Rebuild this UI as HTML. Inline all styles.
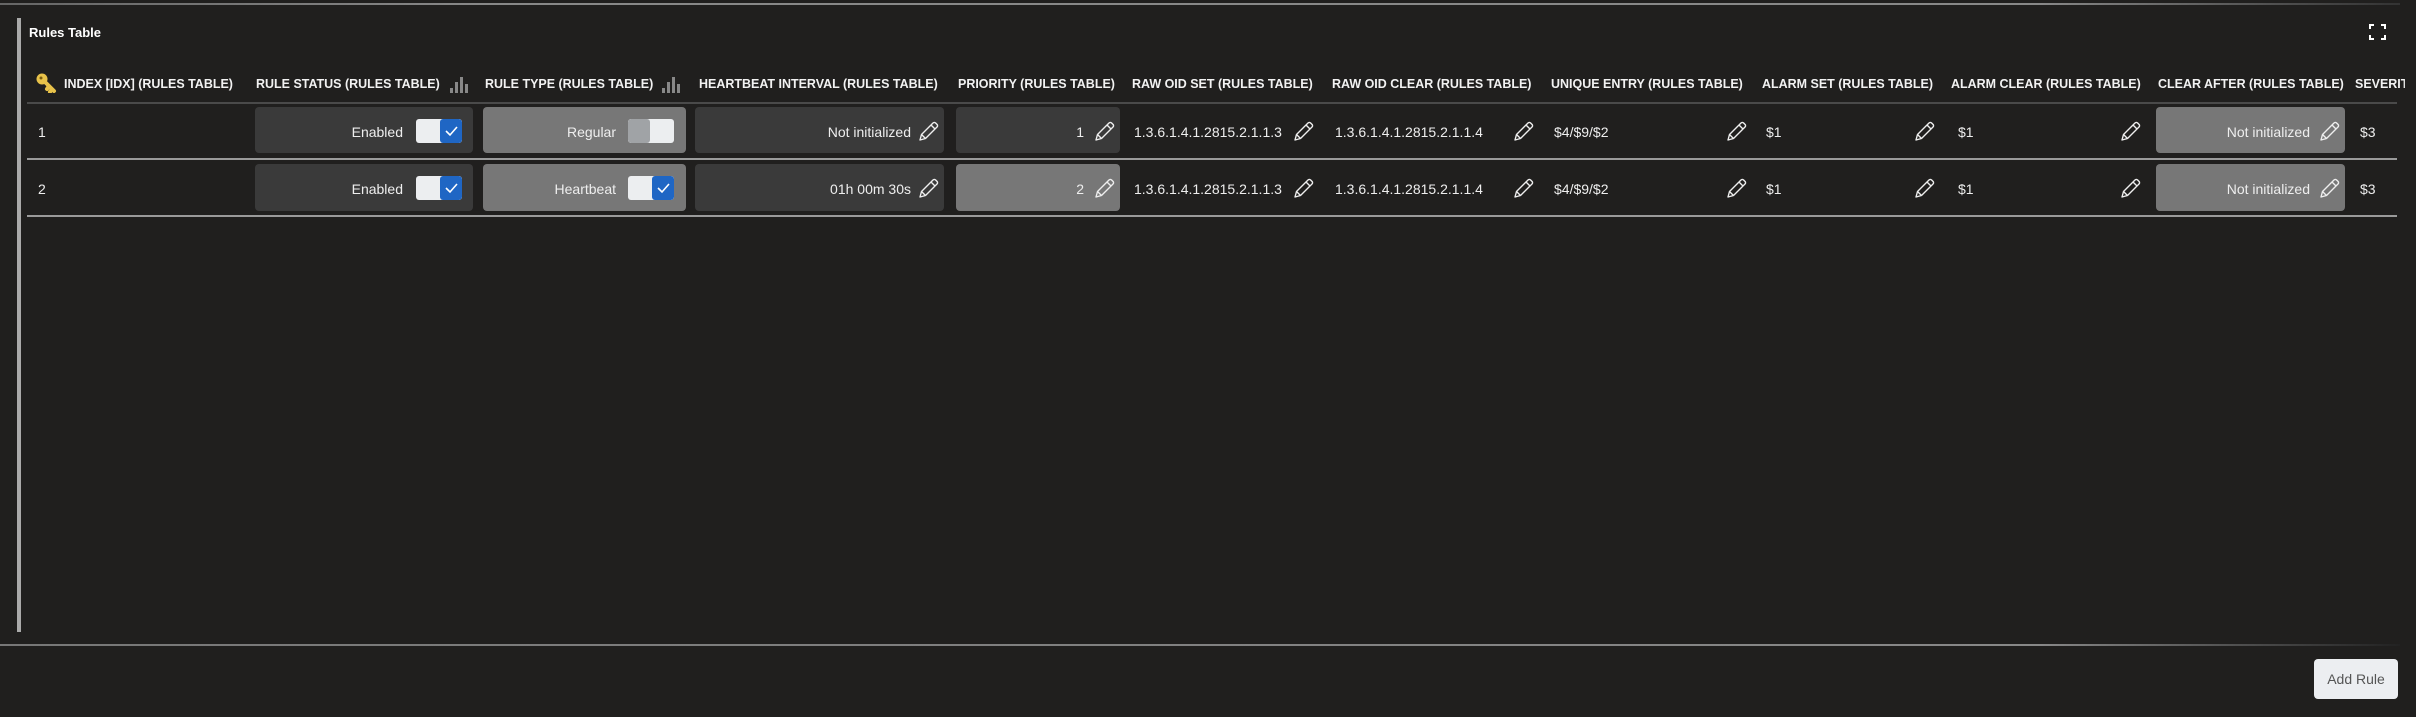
<!DOCTYPE html>
<html><head><meta charset="utf-8"><style>
html,body{margin:0;padding:0;background:#201f1e;width:2416px;height:717px;overflow:hidden;font-family:"Liberation Sans",sans-serif;color:#e8e8e8}
.a{position:absolute}
.h{position:absolute;top:76px;font-size:13px;font-weight:bold;white-space:nowrap;color:#f2f2f2;line-height:16px;transform:scaleX(0.96);transform-origin:left center}
.t{position:absolute;font-size:14px;white-space:nowrap;line-height:16px;color:#eee}
.c{position:absolute;border-radius:4px;background:#3a3a3a}
.g{background:#777}
.tg{position:absolute;width:46px;height:24px;border-radius:3px;overflow:hidden;background:#eceef0}
.tg .on{position:absolute;right:0;top:0;width:22px;height:24px;background:#1f66c4;border-radius:3px}
.tg .off{position:absolute;left:0;top:0;width:22px;height:24px;background:#a0a3a6;border-radius:3px}
.line{position:absolute;left:27px;width:2370px}
</style></head><body>
<div class="a" style="left:0;top:3px;width:2400px;height:2px;background:linear-gradient(90deg,#666,#888 20%,#888 85%,#333)"></div>
<div class="a" style="left:17px;top:18px;width:4px;height:614px;background:#aaa"></div>
<div class="a" style="left:29px;top:25px;font-size:13px;font-weight:bold;color:#fff">Rules Table</div>
<svg class="a" style="left:2369px;top:24px" width="17" height="16" viewBox="0 0 17 16" fill="none" stroke="#fff" stroke-width="2"><path d="M1 5V1h4M12 1h4v4M16 11v4h-4M5 15H1v-4"/></svg>

<svg class="a" style="left:36px;top:73px" width="22" height="20" viewBox="0 0 22 20"><circle cx="6" cy="6" r="5.5" fill="#e8c24a"/><path d="M8 8l10 10M13 13l-2 3M16 16l-2 3" stroke="#e8c24a" stroke-width="4" stroke-linecap="round"/><circle cx="5" cy="5" r="1.5" fill="#7a5d10"/></svg>
<div class="h" style="left:64px">INDEX [IDX] (RULES TABLE)</div>
<div class="h" style="left:256px">RULE STATUS (RULES TABLE)</div>
<svg class="a" style="left:450px;top:75px" width="19" height="18" viewBox="0 0 19 18" fill="#888"><rect x="0" y="13" width="3" height="5"/><rect x="5" y="7" width="3" height="11"/><rect x="10" y="2" width="3" height="16"/><rect x="15" y="9" width="3" height="9"/></svg>
<div class="h" style="left:485px">RULE TYPE (RULES TABLE)</div>
<svg class="a" style="left:662px;top:75px" width="19" height="18" viewBox="0 0 19 18" fill="#888"><rect x="0" y="13" width="3" height="5"/><rect x="5" y="7" width="3" height="11"/><rect x="10" y="2" width="3" height="16"/><rect x="15" y="9" width="3" height="9"/></svg>
<div class="h" style="left:699px">HEARTBEAT INTERVAL (RULES TABLE)</div>
<div class="h" style="left:958px">PRIORITY (RULES TABLE)</div>
<div class="h" style="left:1132px">RAW OID SET (RULES TABLE)</div>
<div class="h" style="left:1332px">RAW OID CLEAR (RULES TABLE)</div>
<div class="h" style="left:1551px">UNIQUE ENTRY (RULES TABLE)</div>
<div class="h" style="left:1762px">ALARM SET (RULES TABLE)</div>
<div class="h" style="left:1951px">ALARM CLEAR (RULES TABLE)</div>
<div class="h" style="left:2158px">CLEAR AFTER (RULES TABLE)</div>
<div class="h" style="left:2355px;width:52px;overflow:hidden">SEVERITY</div>

<div class="line" style="top:102px;height:2px;background:#4a4a4a"></div>
<div class="line" style="top:158px;height:2px;background:#9a9a9a"></div>
<div class="line" style="top:215px;height:2px;background:#9a9a9a"></div>
<div class="a" style="left:0;top:644px;width:2400px;height:2px;background:linear-gradient(90deg,#777,#888 85%,#222)"></div>

<div class="t" style="left:38px;top:124px">1</div>
<div class="c" style="left:255px;top:107px;width:218px;height:46px"></div>
<div class="t" style="right:2013px;top:124px">Enabled</div>
<div class="tg" style="left:416px;top:119px"><div class="on"><svg width="22" height="24"><path d="M6 12l4 4 7-8" stroke="#fff" stroke-width="1.6" fill="none"/></svg></div></div>
<div class="c g" style="left:483px;top:107px;width:203px;height:46px"></div>
<div class="t" style="right:1800px;top:124px">Regular</div>
<div class="tg" style="left:628px;top:119px"><div class="off"></div></div>
<div class="c" style="left:695px;top:107px;width:249px;height:46px"></div>
<div class="t" style="right:1505px;top:124px">Not initialized</div>
<div class="c" style="left:956px;top:107px;width:164px;height:46px"></div>
<div class="t" style="right:1332px;top:124px">1</div>
<div class="t" style="left:1134px;top:124px">1.3.6.1.4.1.2815.2.1.1.3</div>
<div class="t" style="left:1335px;top:124px">1.3.6.1.4.1.2815.2.1.1.4</div>
<div class="t" style="left:1554px;top:124px">$4/$9/$2</div>
<div class="t" style="left:1766px;top:124px">$1</div>
<div class="t" style="left:1958px;top:124px">$1</div>
<div class="c g" style="left:2156px;top:107px;width:189px;height:46px"></div>
<div class="t" style="right:106px;top:124px">Not initialized</div>
<div class="t" style="left:2360px;top:124px">$3</div>

<div class="t" style="left:38px;top:181px">2</div>
<div class="c" style="left:255px;top:164px;width:218px;height:47px"></div>
<div class="t" style="right:2013px;top:181px">Enabled</div>
<div class="tg" style="left:416px;top:176px"><div class="on"><svg width="22" height="24"><path d="M6 12l4 4 7-8" stroke="#fff" stroke-width="1.6" fill="none"/></svg></div></div>
<div class="c g" style="left:483px;top:164px;width:203px;height:47px"></div>
<div class="t" style="right:1800px;top:181px">Heartbeat</div>
<div class="tg" style="left:628px;top:176px"><div class="on"><svg width="22" height="24"><path d="M6 12l4 4 7-8" stroke="#fff" stroke-width="1.6" fill="none"/></svg></div></div>
<div class="c" style="left:695px;top:164px;width:249px;height:47px"></div>
<div class="t" style="right:1505px;top:181px">01h 00m 30s</div>
<div class="c g" style="left:956px;top:164px;width:164px;height:47px"></div>
<div class="t" style="right:1332px;top:181px">2</div>
<div class="t" style="left:1134px;top:181px">1.3.6.1.4.1.2815.2.1.1.3</div>
<div class="t" style="left:1335px;top:181px">1.3.6.1.4.1.2815.2.1.1.4</div>
<div class="t" style="left:1554px;top:181px">$4/$9/$2</div>
<div class="t" style="left:1766px;top:181px">$1</div>
<div class="t" style="left:1958px;top:181px">$1</div>
<div class="c g" style="left:2156px;top:164px;width:189px;height:47px"></div>
<div class="t" style="right:106px;top:181px">Not initialized</div>
<div class="t" style="left:2360px;top:181px">$3</div>

<svg class="a" style="left:0;top:0" width="2416" height="230" fill="none" stroke="#eee" stroke-width="1.4" stroke-linejoin="round">
<defs><path id="p" d="M0 18l1.5-5.5L13 1a1.8 1.8 0 0 1 2.6 0l1.4 1.4a1.8 1.8 0 0 1 0 2.6L5.5 16.5zM1.5 12.5l4 4M11 3l4 4"/></defs>
<g transform="translate(920,122)"><use href="#p"/></g>
<g transform="translate(1096,122)"><use href="#p"/></g>
<g transform="translate(1295,122)"><use href="#p"/></g>
<g transform="translate(1515,122)"><use href="#p"/></g>
<g transform="translate(1728,122)"><use href="#p"/></g>
<g transform="translate(1916,122)"><use href="#p"/></g>
<g transform="translate(2122,122)"><use href="#p"/></g>
<g transform="translate(2321,122)"><use href="#p"/></g>
<g transform="translate(920,179)"><use href="#p"/></g>
<g transform="translate(1096,179)"><use href="#p"/></g>
<g transform="translate(1295,179)"><use href="#p"/></g>
<g transform="translate(1515,179)"><use href="#p"/></g>
<g transform="translate(1728,179)"><use href="#p"/></g>
<g transform="translate(1916,179)"><use href="#p"/></g>
<g transform="translate(2122,179)"><use href="#p"/></g>
<g transform="translate(2321,179)"><use href="#p"/></g>
</svg>

<div class="a" style="left:2314px;top:659px;width:84px;height:40px;background:#eceef1;border-radius:4px;color:#555;font-size:14px;line-height:40px;text-align:center">Add Rule</div>
</body></html>
